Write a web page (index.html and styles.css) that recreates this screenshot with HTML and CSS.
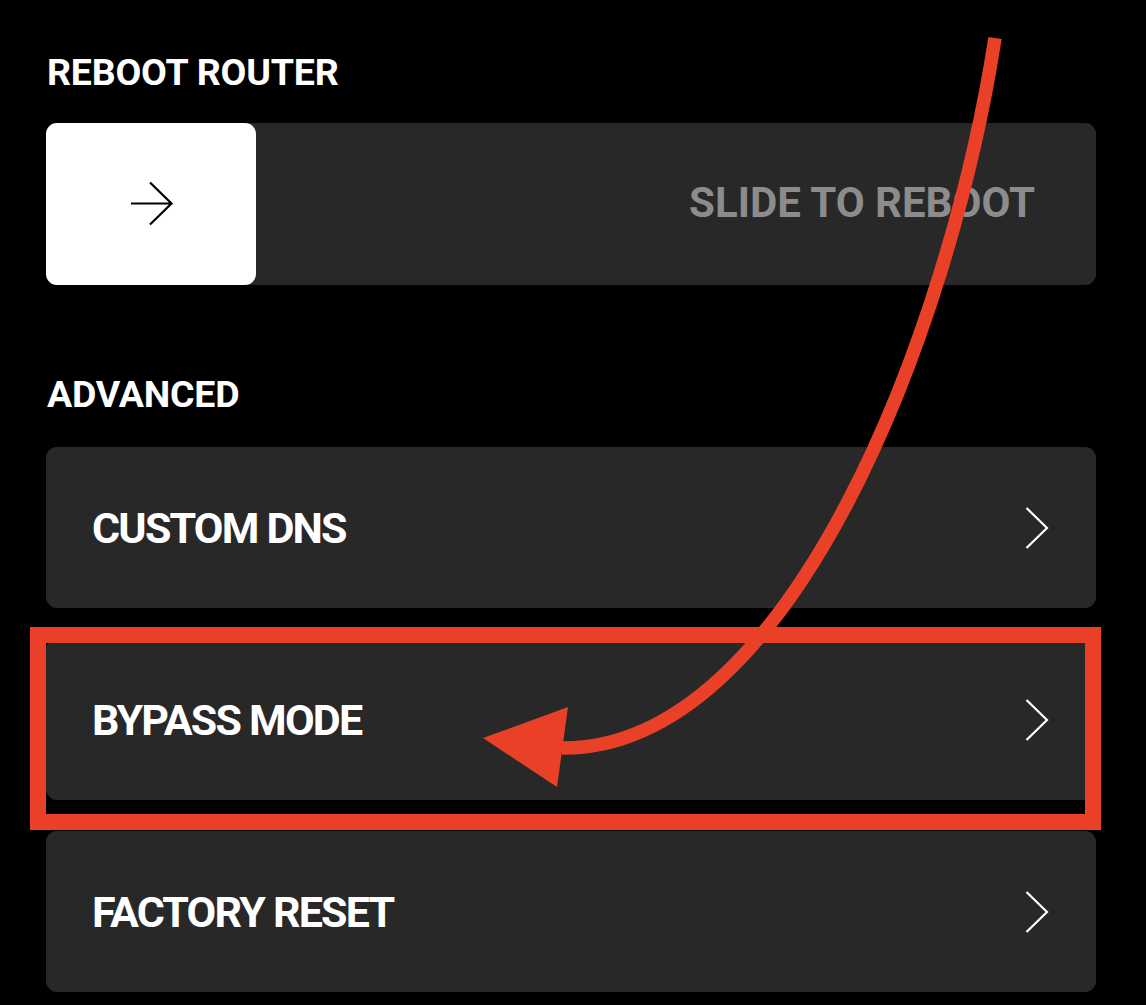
FILE: index.html
```html
<!DOCTYPE html>
<html lang="en">
<head>
<meta charset="utf-8">
<title>Router settings</title>
<link rel="stylesheet" href="styles.css">
</head>
<body>
<main class="page">
  <section class="section">
    <h2 class="section-title">REBOOT ROUTER</h2>
    <div class="slider">
      <div class="knob">
        <svg class="knob-icon" width="44" height="44" viewBox="0 0 44 44" aria-hidden="true">
          <path d="M1 21.5 H41.5 M20 0.5 L41.5 21.5 L20 42.5" fill="none" stroke="#000" stroke-width="2.2"/>
        </svg>
      </div>
      <span class="slider-label">SLIDE TO REBOOT</span>
    </div>
  </section>

  <section class="section section-advanced">
    <h2 class="section-title">ADVANCED</h2>
    <ul class="menu">
      <li class="menu-item"><span class="menu-label">CUSTOM DNS</span><svg class="chevron" width="24" height="44" viewBox="0 0 24 44" aria-hidden="true"><path d="M1.5 2 L22 22 L1.5 42" fill="none" stroke="#fff" stroke-width="2.2"/></svg></li>
      <li class="menu-item"><span class="menu-label">BYPASS MODE</span><svg class="chevron" width="24" height="44" viewBox="0 0 24 44" aria-hidden="true"><path d="M1.5 2 L22 22 L1.5 42" fill="none" stroke="#fff" stroke-width="2.2"/></svg></li>
      <li class="menu-item"><span class="menu-label">FACTORY RESET</span><svg class="chevron" width="24" height="44" viewBox="0 0 24 44" aria-hidden="true"><path d="M1.5 2 L22 22 L1.5 42" fill="none" stroke="#fff" stroke-width="2.2"/></svg></li>
    </ul>
  </section>

  <svg class="annotation" width="1146" height="1005" viewBox="0 0 1146 1005" aria-hidden="true">
    <rect x="38" y="635" width="1055" height="187" fill="none" stroke="#e94027" stroke-width="16"/>
    <path d="M995 38 C950 330 790 750 562 748" fill="none" stroke="#e94027" stroke-width="13.5"/>
    <polygon points="483,738 568,707 557,787" fill="#e94027"/>
  </svg>
</main>
</body>
</html>
```

FILE: styles.css
```css
html, body {
  margin: 0;
  padding: 0;
  background: #000;
}

body {
  font-family: Roboto, "Noto Sans", "Liberation Sans", sans-serif;
  color: #fff;
  width: 1146px;
  height: 1005px;
  overflow: hidden;
}

.page {
  position: relative;
  box-sizing: border-box;
  width: 1146px;
  height: 1005px;
  padding: 52px 50px 0 46px;
}

.section {
  display: flex;
  flex-direction: column;
}

.section-title {
  margin: 0;
  font-size: 37.5px;
  line-height: 40px;
  font-weight: 700;
  letter-spacing: -0.2px;
  padding-left: 1px;
}

.slider {
  margin-top: 31px;
  height: 162px;
  background: #282828;
  border-radius: 11px;
  display: flex;
  align-items: center;
  justify-content: space-between;
}

.knob {
  width: 210px;
  height: 162px;
  background: #fff;
  border-radius: 11px;
  display: flex;
  align-items: center;
  justify-content: center;
}

.knob-icon {
  display: block;
  margin-left: 1px;
}

.slider-label {
  margin-right: 61px;
  margin-top: -3px;
  font-size: 42px;
  font-weight: 700;
  color: #8c8c8c;
  letter-spacing: 0;
}

.section-advanced {
  margin-top: 89px;
}

.menu {
  list-style: none;
  margin: 33px 0 0 0;
  padding: 0;
  display: flex;
  flex-direction: column;
  gap: 31px;
}

.menu-item {
  height: 161px;
  background: #282828;
  border-radius: 11px;
  display: flex;
  align-items: center;
  justify-content: space-between;
  padding: 0 47px 0 46px;
}

.menu-label {
  font-size: 43px;
  font-weight: 700;
  letter-spacing: -1.8px;
}

.chevron {
  display: block;
}

.annotation {
  position: absolute;
  left: 0;
  top: 0;
  pointer-events: none;
}
```
